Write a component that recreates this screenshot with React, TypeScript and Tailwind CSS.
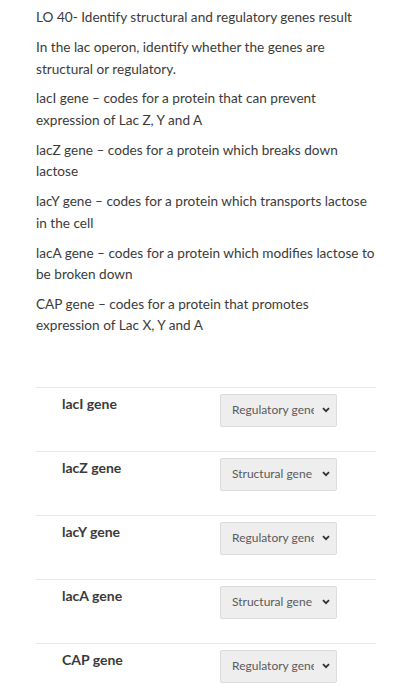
import React from "react";

const paras: string[][] = [
  ["In the lac operon, identify whether the genes are", "structural or regulatory."],
  ["lacI gene – codes for a protein that can prevent", "expression of Lac Z, Y and A"],
  ["lacZ gene – codes for a protein which breaks down", "lactose"],
  ["lacY gene – codes for a protein which transports lactose", "in the cell"],
  ["lacA gene – codes for a protein which modifies lactose to", "be broken down"],
  ["CAP gene – codes for a protein that promotes", "expression of Lac X, Y and A"],
];

const rows = [
  ["lacI gene", "Regulatory gene"],
  ["lacZ gene", "Structural gene"],
  ["lacY gene", "Regulatory gene"],
  ["lacA gene", "Structural gene"],
  ["CAP gene", "Regulatory gene"],
];

function Chevron() {
  return (
    <svg width="8" height="6" viewBox="0 0 8 6" className="shrink-0">
      <path d="M1 1.2 L4 4.2 L7 1.2" fill="none" stroke="#333" strokeWidth="1.8" />
    </svg>
  );
}

export default function App() {
  return (
    <div
      className="w-[412px] h-[700px] bg-white overflow-hidden text-[#3b3b3b]"
      style={{ fontFamily: "Lato, 'Open Sans', sans-serif" }}
    >
      <div className="pl-[36px] pr-[20px] pt-[7px]">
        <p className="text-[13.6px] leading-[21px] whitespace-nowrap">LO 40- Identify structural and regulatory genes result</p>
        <div className="mt-[9px] flex flex-col gap-[8.4px]">
          {paras.map((p, i) => (
            <p key={i} className="text-[13.6px] leading-[21.5px] whitespace-nowrap">
              {p[0]}
              <br />
              {p[1]}
            </p>
          ))}
        </div>
      </div>
      <div className="mt-[50px] ml-[36px] w-[340px]">
        {rows.map(([label, val], i) => (
          <div key={i} className="h-[64px] border-t border-[#e8e8e8] flex items-start">
            <div className="w-[184px] pl-[26px] pt-[5px] text-[14px] font-bold text-[#3a3a3a]">{label}</div>
            <div className="mt-[6px] w-[117px] h-[33px] bg-[#eeeeee] border border-[#dcdcdc] rounded-[2px] flex items-center pl-[11px] pr-[6px]">
              <span className="w-[84.5px] mr-[8.5px] overflow-hidden whitespace-nowrap text-[12px] text-[#5a5a5a]">{val}</span>
              <Chevron />
            </div>
          </div>
        ))}
      </div>
    </div>
  );
}
